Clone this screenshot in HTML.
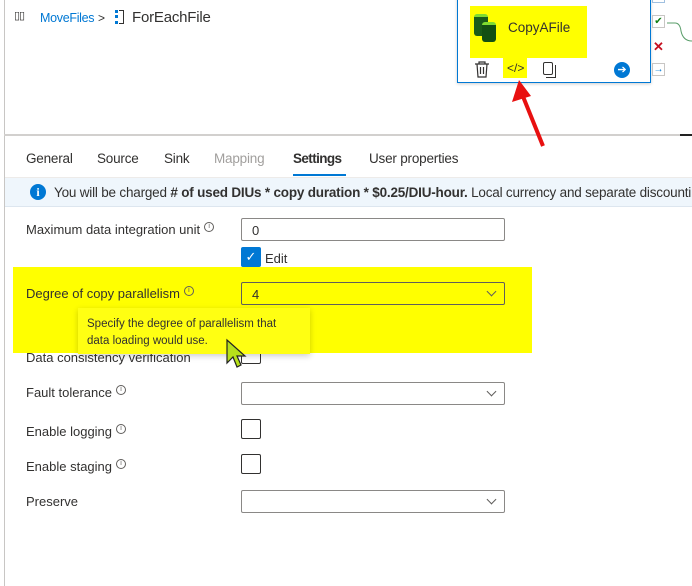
<!DOCTYPE html>
<html><head><style>
*{margin:0;padding:0;box-sizing:border-box}
body{width:692px;height:586px;background:#fff;font-family:"Liberation Sans",sans-serif;position:relative;overflow:hidden;color:#323130}
.a{position:absolute}
.lbl{position:absolute;left:26px;font-size:13px;color:#323130}
.inp{position:absolute;left:241px;width:264px;height:23px;border:1px solid #8a8886;border-radius:2px;font-size:13px;padding:4px 10px}
.chev{position:absolute;right:9px;top:5px;width:7px;height:7px;border-right:1px solid #605e5c;border-bottom:1px solid #605e5c;transform:rotate(45deg)}
.cb{position:absolute;left:241px;width:20px;height:20px;border:1px solid #323130;border-radius:2px}
.i{display:inline-block;width:10px;height:10px;border:1px solid #605e5c;border-radius:50%;font-size:7px;line-height:8px;text-align:center;vertical-align:top;margin-left:4px;color:#605e5c}
.tab{position:absolute;top:151px;font-size:13.5px;white-space:nowrap;letter-spacing:-0.2px}
</style></head><body>
<div class="a" style="left:4px;top:0;width:1px;height:586px;background:#c8c6c4"></div>
<div class="a" style="left:14px;top:11px;width:17px;height:11px;font-size:11px;line-height:11px;letter-spacing:-1px;color:#323130">▯▯</div>
<div class="a" style="left:40px;top:11px;font-size:12.5px;color:#0078d4;letter-spacing:-0.3px">MoveFiles</div>
<div class="a" style="left:98px;top:11px;font-size:12px;color:#323130">&gt;</div>
<div class="a" style="left:115px;top:10px;width:3px;height:14px;border-left:3px dotted #0078d4"></div>
<div class="a" style="left:119px;top:10px;width:5px;height:14px;border:1px solid #323130;border-left:none"></div>
<div class="a" style="left:132px;top:9px;font-size:15px;color:#323130;letter-spacing:-0.2px">ForEachFile</div>
<div class="a" style="left:4px;top:134px;width:676px;height:2px;background:#d2d0ce"></div>
<div class="a" style="left:680px;top:134px;width:12px;height:2px;background:#222"></div>
<!-- card -->
<div class="a" style="left:457px;top:-4px;width:194px;height:87px;border:1px solid #0078d4;border-top:3px solid #0078d4;background:#fff;box-shadow:0 1px 3px rgba(0,0,0,.2)"></div>
<div class="a" style="left:470px;top:6px;width:117px;height:52px;background:#ffff00"></div>
<div class="a" style="left:474px;top:14px;width:14px;height:22px;background:#1a5c1a;border-radius:3px;border-top:3px solid #7fdc30"></div>
<div class="a" style="left:482px;top:22px;width:14px;height:20px;background:#135013;border-radius:3px;border-top:3px solid #7fdc30"></div>
<div class="a" style="left:508px;top:20px;font-size:13.5px">CopyAFile</div>
<div class="a" style="left:503px;top:58px;width:24px;height:20px;background:#ffff00"></div>
<svg class="a" style="left:474px;top:61px" width="16" height="17"><path d="M1 3H15M5 3V1H11V3M3 3L4 16H12L13 3M6.5 6V13M9.5 6V13" stroke="#323130" stroke-width="1.2" fill="none"/></svg>
<div class="a" style="left:507px;top:61px;font-size:12px">&lt;/&gt;</div>
<div class="a" style="left:543px;top:62px;width:10px;height:13px;border:1.5px solid #323130;border-radius:2px"></div>
<div class="a" style="left:546px;top:65px;width:10px;height:13px;border-right:1.5px solid #323130;border-bottom:1.5px solid #323130"></div>
<div class="a" style="left:614px;top:62px;width:16px;height:16px;border-radius:50%;background:#0078d4;color:#fff;font-size:11px;text-align:center;line-height:16px">➔</div>
<div class="a" style="left:652px;top:-6px;width:13px;height:9px;border:1px solid #a0c0e0"></div>
<div class="a" style="left:652px;top:15px;width:13px;height:13px;border:1px solid #c8c6c4;color:#107c10;font-size:10px;line-height:11px;text-align:center">✔</div>
<div class="a" style="left:652px;top:40px;width:13px;height:13px;color:#c50f1f;font-size:13px;line-height:13px;text-align:center;font-weight:bold">✕</div>
<div class="a" style="left:652px;top:63px;width:13px;height:13px;border:1px solid #c8c6c4;color:#0078d4;font-size:10px;line-height:11px;text-align:center">→</div>
<svg class="a" style="left:660px;top:15px" width="32" height="30"><path d="M7 8 H15 Q20 8 21 16 Q23 26 32 26" stroke="#5a9e6a" fill="none"/></svg>
<!-- arrow -->
<svg class="a" style="left:505px;top:76px" width="50" height="75"><path d="M38 70 L17 18" stroke="#e81010" stroke-width="4"/><path d="M14 4 L7 26 L26 20 Z" fill="#e81010"/></svg>
<!-- tabs -->
<div class="tab" style="left:26px">General</div>
<div class="tab" style="left:97px">Source</div>
<div class="tab" style="left:164px">Sink</div>
<div class="tab" style="left:214px;color:#a19f9d">Mapping</div>
<div class="tab" style="left:293px;font-weight:bold;letter-spacing:-0.6px">Settings</div>
<div class="tab" style="left:369px">User properties</div>
<div class="a" style="left:293px;top:174px;width:53px;height:2px;background:#0078d4"></div>
<div class="a" style="left:5px;top:177px;width:687px;height:1px;background:#edebe9"></div>
<div class="a" style="left:5px;top:178px;width:687px;height:29px;background:#eff6fc;border-bottom:1px solid #dde6ef;overflow:hidden">
<div class="a" style="left:25px;top:6px;width:16px;height:16px;border-radius:50%;background:#0078d4;color:#fff;font-weight:bold;font-size:12px;text-align:center;line-height:16px;font-family:'Liberation Serif',serif">i</div>
<div class="a" style="left:49px;top:7px;font-size:13.5px;white-space:nowrap;letter-spacing:-0.2px">You will be charged <b># of used DIUs * copy duration * $0.25/DIU-hour.</b> Local currency and separate discounting</div>
</div>
<!-- form -->
<div class="lbl" style="top:222px">Maximum data integration unit<span class="i">i</span></div>
<div class="inp" style="top:218px">0</div>
<div class="a" style="left:241px;top:247px;width:20px;height:20px;background:#0078d4;border-radius:2px;color:#fff;font-size:13px;text-align:center;line-height:20px">✓</div>
<div class="a" style="left:265px;top:251px;font-size:13px">Edit</div>
<div class="a" style="left:13px;top:267px;width:519px;height:86px;background:#ffff00"></div>
<div class="lbl" style="top:286px">Degree of copy parallelism<span class="i">i</span></div>
<div class="inp" style="top:282px;background:#ffff00;border-color:#605e5c">4<div class="chev"></div></div>
<div class="lbl" style="top:350px">Data consistency verification</div>
<div class="cb" style="top:344px"></div>
<div class="a" style="left:78px;top:308px;width:232px;height:46px;background:#ffff12;box-shadow:0 2px 6px rgba(0,0,0,.2);font-size:11.5px;line-height:17px;padding:8px 9px;color:#323130">Specify the degree of parallelism that data loading would use.</div>
<svg class="a" style="left:225px;top:338px" width="24" height="32"><path d="M2 2 L2 25 L8 19 L12 29 L16 27 L12 18 L20 18 Z" fill="#b7e11a" stroke="#222" stroke-width="1.2"/></svg>
<div class="lbl" style="top:385px">Fault tolerance<span class="i">i</span></div>
<div class="inp" style="top:382px"><div class="chev"></div></div>
<div class="lbl" style="top:424px">Enable logging<span class="i">i</span></div>
<div class="cb" style="top:419px"></div>
<div class="lbl" style="top:459px">Enable staging<span class="i">i</span></div>
<div class="cb" style="top:454px"></div>
<div class="lbl" style="top:494px">Preserve</div>
<div class="inp" style="top:490px"><div class="chev"></div></div>
</body></html>
